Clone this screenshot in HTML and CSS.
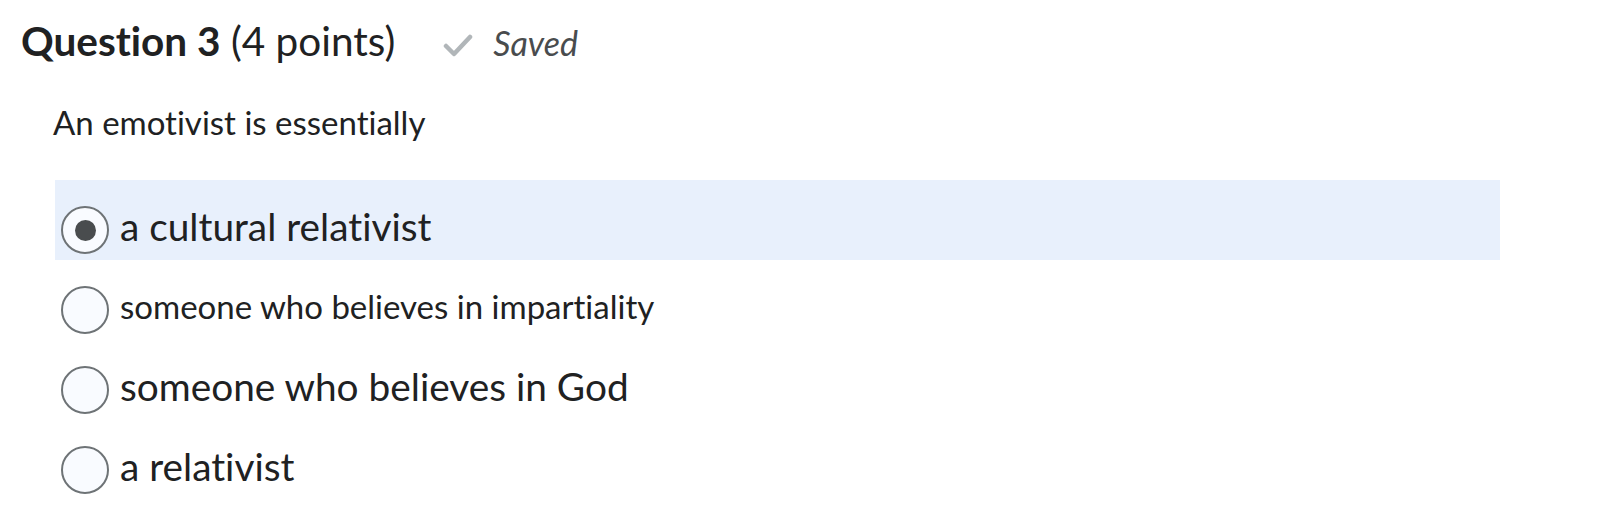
FILE: index.html
```html
<!DOCTYPE html>
<html lang="en">
<head>
	<meta charset="UTF-8">
	<title>Question 3</title>
	<link rel="stylesheet" href="styles.css">
</head>
<body>
	<div class="quiz">
		<div class="q-header">
			<h2 class="q-title"><strong>Question 3</strong> (4 points)</h2>
			<div class="q-saved">
				<svg class="q-check" width="30" height="24" viewBox="0 0 30 24">
					<path d="M3 13 L11 21 L27 4" fill="none" stroke="#b1b6b9" stroke-width="4.5" stroke-linecap="round" stroke-linejoin="round"/>
				</svg>
				<span>Saved</span>
			</div>
		</div>
		<p class="q-text">An emotivist is essentially</p>
		<div class="choices">
			<label class="choice choice-selected">
				<span class="radio radio-on"></span>
				<span class="choice-text big">a cultural relativist</span>
			</label>
			<label class="choice">
				<span class="radio"></span>
				<span class="choice-text">someone who believes in impartiality</span>
			</label>
			<label class="choice">
				<span class="radio"></span>
				<span class="choice-text big">someone who believes in God</span>
			</label>
			<label class="choice">
				<span class="radio"></span>
				<span class="choice-text big">a relativist</span>
			</label>
		</div>
	</div>
</body>
</html>
```

FILE: styles.css
```css
* {
	margin: 0;
	box-sizing: border-box;
}

body {
	background-color: #ffffff;
	color: #202122;
	font-family: Lato, "Noto Sans", sans-serif;
	font-variant-ligatures: none;
}

.quiz {
	padding: 16px 0 0 0;
}

.q-header {
	display: flex;
	align-items: baseline;
	padding-left: 21px;
}

.q-title {
	font-size: 40.5px;
	font-weight: 400;
	color: #202122;
}

.q-title strong {
	font-weight: 700;
}

.q-saved {
	display: flex;
	align-items: baseline;
	margin-left: 48px;
	color: #494c4e;
	font-size: 34px;
	font-style: italic;
}

.q-check {
	margin-right: 20px;
	align-self: center;
	position: relative;
	top: 2px;
}

.q-text {
	font-size: 33px;
	padding-left: 53px;
	margin-top: 37px;
}

.choices {
	margin: 38px 0 0 55px;
	width: 1445px;
}

.choice {
	display: flex;
	align-items: center;
	padding: 26px 0 6px 6px;
}

.choice-selected {
	background-color: #e8f0fc;
}

.radio {
	width: 48px;
	height: 48px;
	flex: none;
	border: 2px solid #6e7376;
	border-radius: 50%;
	background-color: #f9fbff;
	display: flex;
	align-items: center;
	justify-content: center;
}

.radio-on::after {
	content: "";
	width: 21px;
	height: 21px;
	border-radius: 50%;
	background-color: #494c4e;
}

.choice-text {
	margin: 0 0 8px 11px;
	font-size: 33px;
	line-height: 40px;
	color: #202122;
}

.choice-text.big {
	font-size: 38.8px;
}
```
